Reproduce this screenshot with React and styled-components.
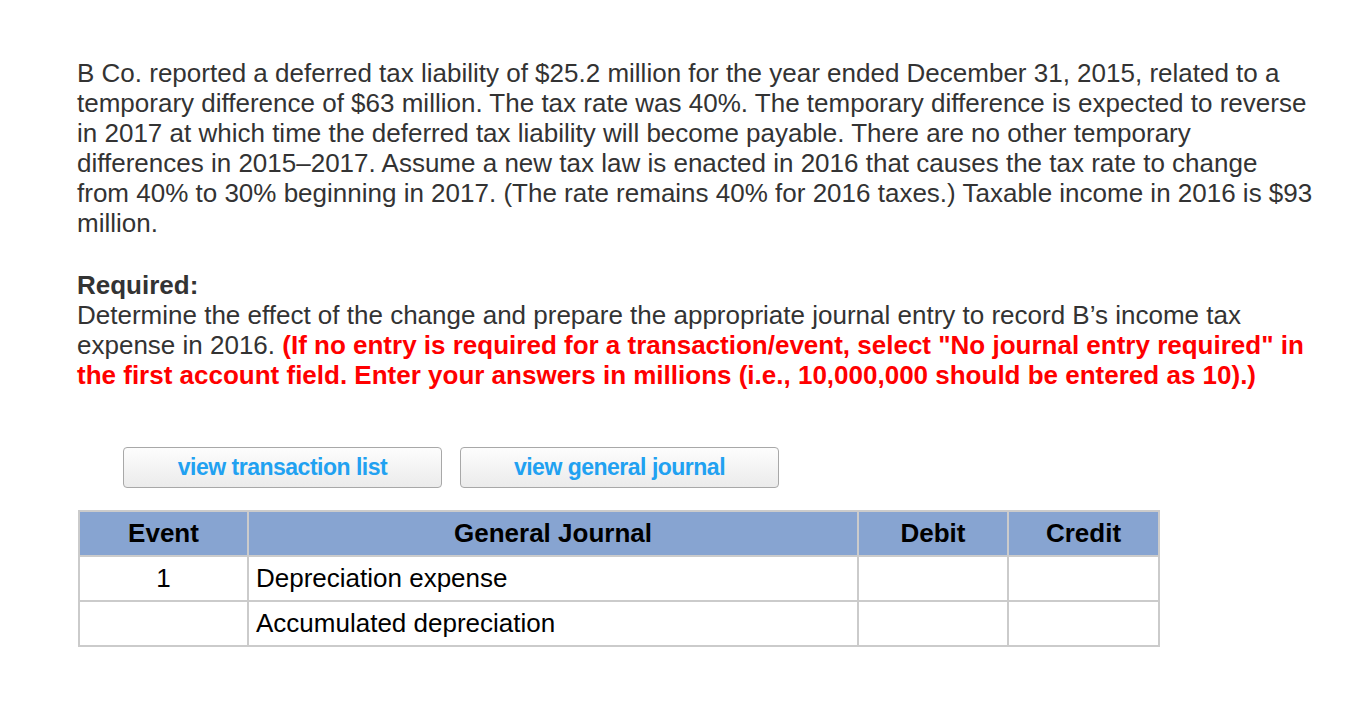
import React from "react";
import styled, { createGlobalStyle } from "styled-components";

const GlobalStyle = createGlobalStyle`
  body {
    margin: 0;
    background: #fff;
    font-family: "Liberation Sans", Arial, sans-serif;
  }
`;

const Page = styled.div`
  padding: 58px 0 0 77px;
  width: 1270px;
`;

const Text = styled.p`
  margin: 0;
  font-size: 26px;
  line-height: 30px;
  color: #333;
`;

const Heading = styled.div`
  margin-top: 32px;
  font-size: 26px;
  line-height: 30px;
  font-weight: bold;
  color: #333;
`;

const Warn = styled.span`
  color: #f00;
  font-weight: bold;
`;

const Buttons = styled.div`
  display: flex;
  gap: 18px;
  margin: 57px 0 0 46px;
`;

const Btn = styled.button`
  width: 319px;
  height: 41px;
  border: 1px solid #a8a8a8;
  border-radius: 4px;
  background: linear-gradient(#fdfdfd, #ebebeb);
  color: #21a1f1;
  font-family: "Liberation Sans", Arial, sans-serif;
  font-size: 23px;
  font-weight: bold;
  letter-spacing: -0.5px;
  cursor: pointer;
`;

const Table = styled.table`
  margin: 22px 0 0 1px;
  border-collapse: collapse;
  border: 2px solid #cbcbcb;
  font-size: 26px;
  color: #000;
`;

const Th = styled.th`
  width: ${(p) => p.w}px;
  height: 43px;
  padding: 0;
  background: #87a4d1;
  border: 2px solid #cbcbcb;
  font-weight: bold;
  text-align: center;
`;

const Td = styled.td`
  height: 43px;
  padding: 0 0 0 ${(p) => (p.center ? 0 : 7)}px;
  border: 2px solid #cbcbcb;
  text-align: ${(p) => (p.center ? "center" : "left")};
  background: #fff;
`;

const rows = [
  { event: "1", account: "Depreciation expense" },
  { event: "", account: "Accumulated depreciation" },
];

export default function App() {
  return (
    <>
      <GlobalStyle />
      <Page>
        <Text>
          B Co. reported a deferred tax liability of $25.2 million for the year
          ended December 31, 2015, related to a<br />
          temporary difference of $63 million. The tax rate was 40%. The
          temporary difference is expected to reverse<br />
          in 2017 at which time the deferred tax liability will become payable.
          There are no other temporary<br />
          differences in 2015–2017. Assume a new tax law is enacted in 2016 that
          causes the tax rate to change<br />
          from 40% to 30% beginning in 2017. (The rate remains 40% for 2016
          taxes.) Taxable income in 2016 is $93<br />
          million.
        </Text>
        <Heading>Required:</Heading>
        <Text>
          Determine the effect of the change and prepare the appropriate journal
          entry to record B’s income tax<br />
          expense in 2016.{" "}
          <Warn>
            (If no entry is required for a transaction/event, select "No
            journal entry required" in<br />
            the first account field. Enter your answers in millions (i.e.,
            10,000,000 should be entered as 10).)
          </Warn>
        </Text>
        <Buttons>
          <Btn>view transaction list</Btn>
          <Btn>view general journal</Btn>
        </Buttons>
        <Table>
          <thead>
            <tr>
              <Th w={167}>Event</Th>
              <Th w={608}>General Journal</Th>
              <Th w={148}>Debit</Th>
              <Th w={149}>Credit</Th>
            </tr>
          </thead>
          <tbody>
            {rows.map((r, i) => (
              <tr key={i}>
                <Td center>{r.event}</Td>
                <Td>{r.account}</Td>
                <Td />
                <Td />
              </tr>
            ))}
          </tbody>
        </Table>
      </Page>
    </>
  );
}
